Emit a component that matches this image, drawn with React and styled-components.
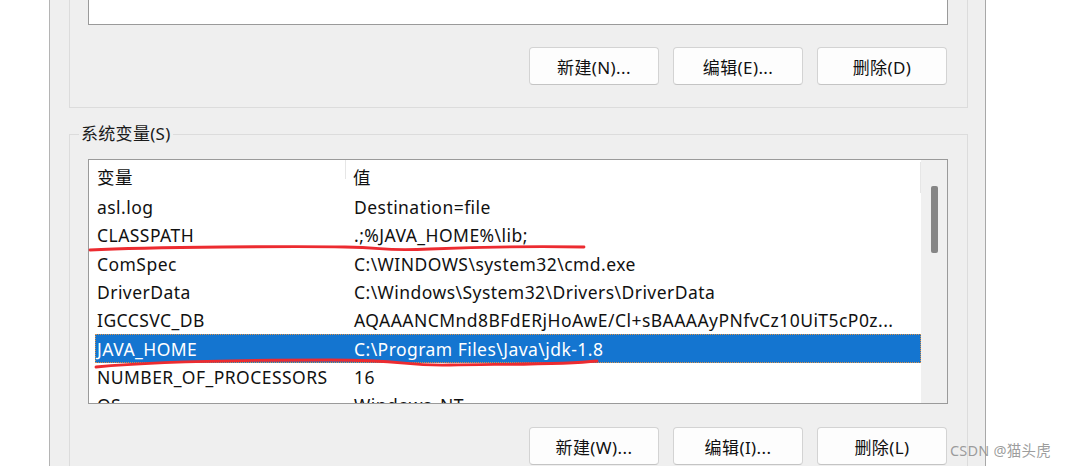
import React from "react";
import styled, { createGlobalStyle } from "styled-components";

const GlobalStyle = createGlobalStyle`
  html, body {
    margin: 0;
    padding: 0;
    background: #fff;
  }
  body {
    font-family: "Noto Sans", "Noto Sans CJK SC", sans-serif;
    color: #1a1a1a;
    overflow: hidden;
  }
`;

const Page = styled.div`
  position: relative;
  height: 466px;
  overflow: hidden;
`;

const Dialog = styled.div`
  box-sizing: border-box;
  margin-left: 49px;
  width: 937px;
  height: 466px;
  background: #efefef;
  border-left: 1px solid #b4b4b4;
  border-right: 1px solid #a8a8a8;
  padding: 0 17px 0 19px;
`;

const TopGroup = styled.div`
  border: 1px solid #dcdcdc;
  border-top: none;
  padding: 0 19px 22px 18px;
`;

const TopList = styled.div`
  box-sizing: border-box;
  height: 25px;
  background: #fff;
  border: 1px solid #9a9a9a;
  border-top: none;
`;

const ButtonRow = styled.div`
  display: flex;
  justify-content: flex-end;
  gap: 14px;
  padding-right: 1px;
  margin-top: ${({ $top }) => $top}px;
`;

const Button = styled.button`
  box-sizing: border-box;
  width: 130px;
  height: 38px;
  background: #fdfdfd;
  border: 1px solid #d3d3d3;
  border-bottom-color: #c4c4c4;
  border-radius: 4px;
  font-family: "Noto Sans", "Noto Sans CJK SC", sans-serif;
  font-size: 17px;
  letter-spacing: 0.4px;
  color: #111;
  padding: 0;
`;

const Group = styled.fieldset`
  margin: 16px 0 0;
  padding: 0;
  border: 1px solid #dcdcdc;
  min-inline-size: 0;
`;

const Legend = styled.legend`
  margin-left: 9px;
  padding: 0 2px;
  font-size: 17px;
  line-height: 20px;
  letter-spacing: 0.3px;
  color: #1a1a1a;
`;

const GroupBody = styled.div`
  padding: 15px 19px 20px 18px;
`;

const ListBox = styled.div`
  position: relative;
  box-sizing: border-box;
  height: 245px;
  background: #fff;
  border: 1px solid #9a9a9a;
  display: flex;
  overflow: visible;
`;

const ListArea = styled.div`
  flex: 1;
  overflow: hidden;
  font-size: 17.5px;
  letter-spacing: 0.45px;
  color: #111;
`;

const Header = styled.div`
  position: relative;
  height: 33px;
  display: flex;
  align-items: center;
  &::after {
    content: "";
    position: absolute;
    right: 0;
    top: 2px;
    bottom: 0;
    width: 1px;
    background: #e6e6e6;
  }
`;

const HeaderCell = styled.div`
  position: relative;
  box-sizing: border-box;
  width: ${({ $w }) => ($w ? `${$w}px` : "auto")};
  padding-left: ${({ $pl }) => $pl}px;
  ${({ $divider }) =>
    $divider &&
    `&::after {
      content: "";
      position: absolute;
      right: 0;
      top: -14px;
      height: 29px;
      width: 1px;
      background: #e6e6e6;
    }`}
`;

const Row = styled.div`
  box-sizing: border-box;
  height: 28.3px;
  margin-left: 6px;
  display: flex;
  align-items: center;
  white-space: nowrap;
  background: ${({ $selected }) => ($selected ? "#1475d0" : "transparent")};
  color: ${({ $selected }) => ($selected ? "#fff" : "inherit")};
  outline: ${({ $selected }) => ($selected ? "1px dotted #d9924a" : "none")};
  outline-offset: -1px;
`;

const NameCell = styled.div`
  box-sizing: border-box;
  width: 251px;
  padding-left: 2px;
  flex-shrink: 0;
`;

const ValueCell = styled.div`
  padding-left: 8px;
  overflow: hidden;
`;

const ScrollTrack = styled.div`
  width: 26px;
  background: #f0f0f0;
  display: flex;
  flex-direction: column;
  align-items: center;
  padding-top: 26px;
`;

const Thumb = styled.div`
  width: 7px;
  height: 67px;
  background: #868686;
  border-radius: 2px;
`;

const Marks = styled.svg`
  position: absolute;
  left: -1px;
  top: -1px;
  overflow: visible;
  pointer-events: none;
`;

const Watermark = styled.div`
  position: absolute;
  left: 950px;
  top: 439px;
  font-size: 14.5px;
  color: rgba(140, 140, 140, 0.85);
  letter-spacing: 0.2px;
`;

const vars = [
  ["asl.log", "Destination=file"],
  ["CLASSPATH", ".;%JAVA_HOME%\\lib;"],
  ["ComSpec", "C:\\WINDOWS\\system32\\cmd.exe"],
  ["DriverData", "C:\\Windows\\System32\\Drivers\\DriverData"],
  ["IGCCSVC_DB", "AQAAANCMnd8BFdERjHoAwE/Cl+sBAAAAyPNfvCz10UiT5cP0z..."],
  ["JAVA_HOME", "C:\\Program Files\\Java\\jdk-1.8", true],
  ["NUMBER_OF_PROCESSORS", "16"],
  ["OS", "Windows_NT"],
];

export default function App() {
  return (
    <Page>
      <GlobalStyle />
      <Dialog>
        <TopGroup>
          <TopList />
          <ButtonRow $top={22}>
            <Button>新建(N)...</Button>
            <Button>编辑(E)...</Button>
            <Button>删除(D)</Button>
          </ButtonRow>
        </TopGroup>

        <Group>
          <Legend>系统变量(S)</Legend>
          <GroupBody>
            <ListBox>
              <ListArea>
                <Header>
                  <HeaderCell $w={257} $pl={8} $divider>
                    变量
                  </HeaderCell>
                  <HeaderCell $pl={7}>值</HeaderCell>
                </Header>
                {vars.map(([name, value, selected]) => (
                  <Row key={name} $selected={selected}>
                    <NameCell>{name}</NameCell>
                    <ValueCell>{value}</ValueCell>
                  </Row>
                ))}
              </ListArea>
              <ScrollTrack>
                <Thumb />
              </ScrollTrack>
              <Marks width="860" height="245" viewBox="0 0 860 245">
                <path
                  d="M 2 91 C 62 88, 212 87, 257 88 S 292 92, 342 90 S 442 87, 496 88"
                  fill="none"
                  stroke="#ec2b30"
                  strokeWidth="2.8"
                  strokeLinecap="round"
                />
                <path
                  d="M 8 208 C 62 203, 162 201, 242 201 S 312 207, 362 206 S 472 206, 509 202"
                  fill="none"
                  stroke="#ec2b30"
                  strokeWidth="2.8"
                  strokeLinecap="round"
                />
              </Marks>
            </ListBox>
            <ButtonRow $top={23}>
              <Button>新建(W)...</Button>
              <Button>编辑(I)...</Button>
              <Button>删除(L)</Button>
            </ButtonRow>
          </GroupBody>
        </Group>
      </Dialog>
      <Watermark>CSDN @猫头虎</Watermark>
    </Page>
  );
}
